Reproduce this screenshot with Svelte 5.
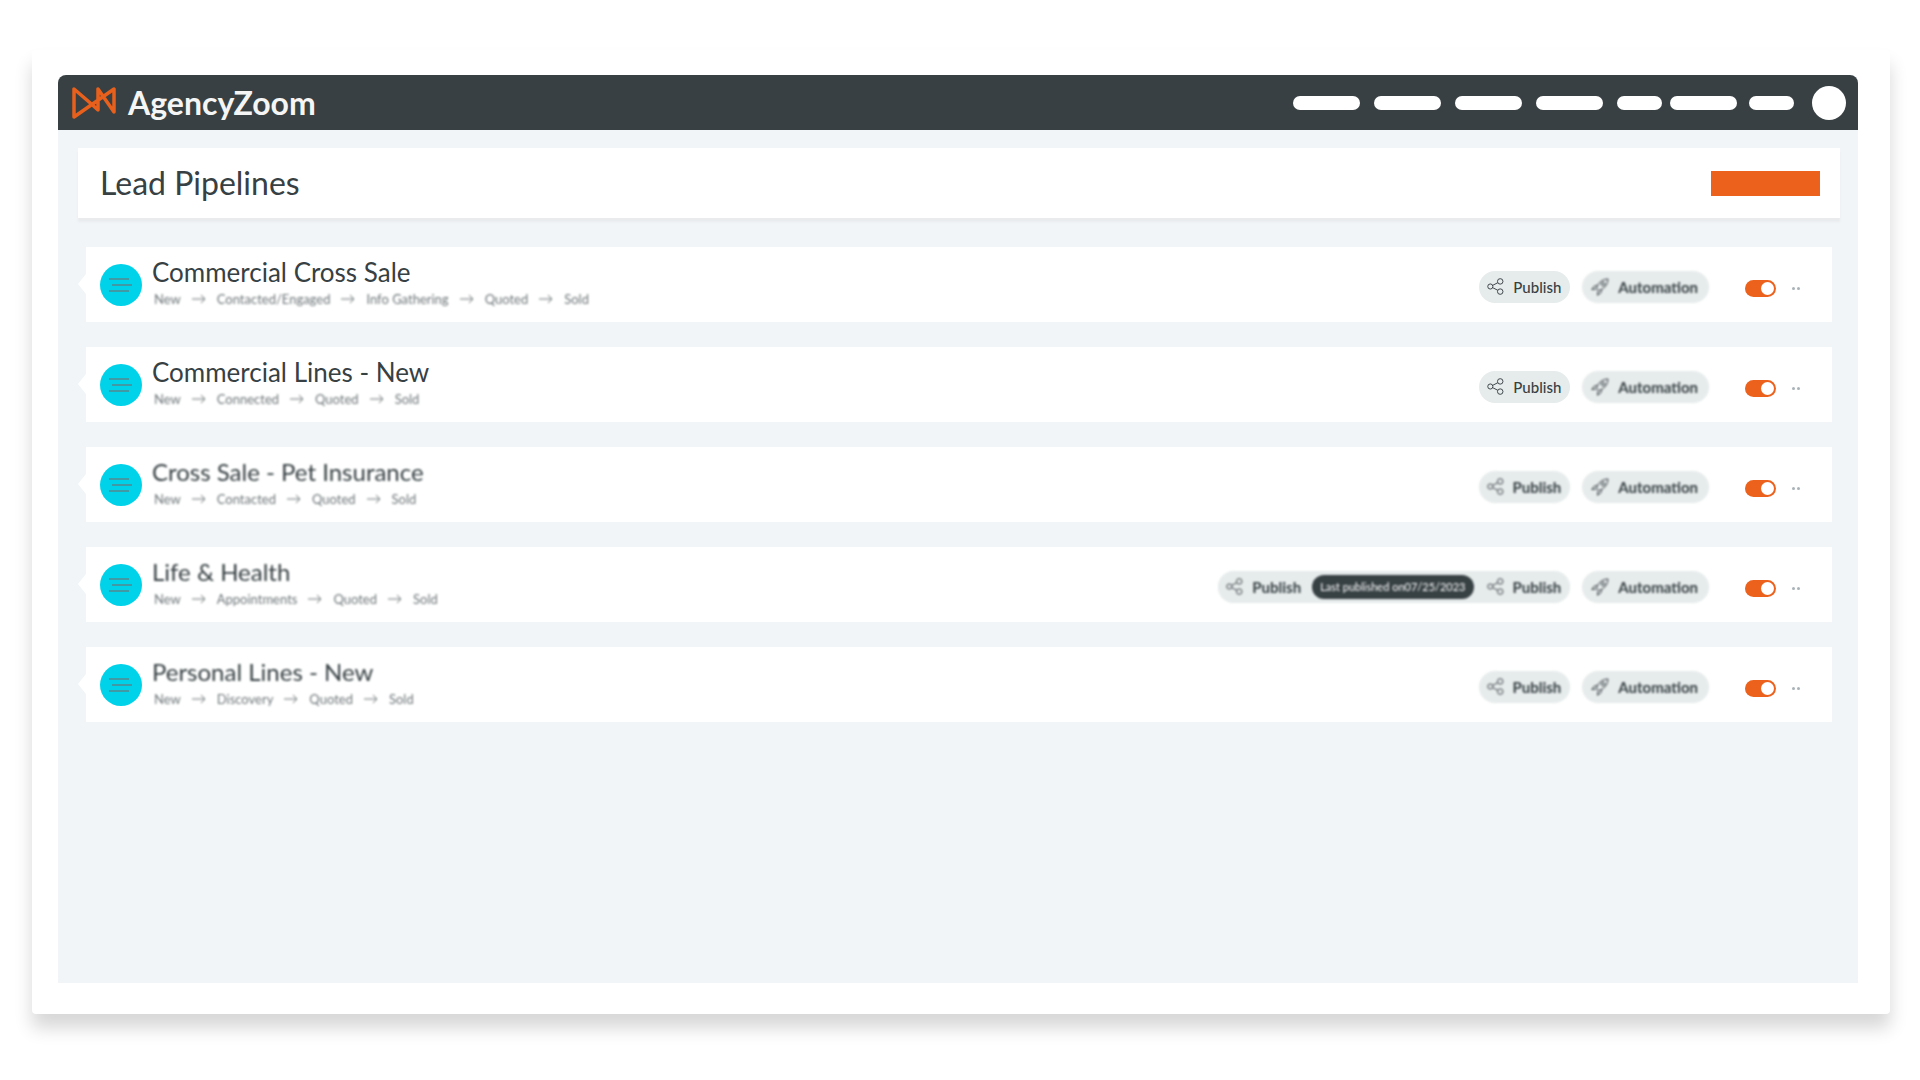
<script lang="ts">
    type Pipeline = {
        name: string;
        stages: string[];
        focused?: boolean;
        lastPublished?: string;
        enabled: boolean;
    };

    const navWidths = ["wide", "wide", "wide", "wide", "short", "wide", "short"];

    let pipelines: Pipeline[] = $state([
        {
            name: "Commercial Cross Sale",
            stages: ["New", "Contacted/Engaged", "Info Gathering", "Quoted", "Sold"],
            focused: true,
            enabled: true,
        },
        {
            name: "Commercial Lines - New",
            stages: ["New", "Connected", "Quoted", "Sold"],
            focused: true,
            enabled: true,
        },
        {
            name: "Cross Sale - Pet Insurance",
            stages: ["New", "Contacted", "Quoted", "Sold"],
            enabled: true,
        },
        {
            name: "Life & Health",
            stages: ["New", "Appointments", "Quoted", "Sold"],
            lastPublished: "07/25/2023",
            enabled: true,
        },
        {
            name: "Personal Lines - New",
            stages: ["New", "Discovery", "Quoted", "Sold"],
            enabled: true,
        },
    ]);
</script>

{#snippet shareIcon()}
    <svg class="icon" viewBox="0 0 18 18" fill="none" stroke="currentColor" aria-hidden="true">
        <circle cx="3.5" cy="9" r="2.7" />
        <circle cx="14" cy="3.6" r="2.9" />
        <circle cx="14" cy="14.4" r="2.9" />
        <path d="M6 7.800 11.400 5M6 10.200l5.400 2.800" />
    </svg>
{/snippet}

{#snippet rocketIcon()}
    <svg class="icon rocket" viewBox="0 0 18 18" fill="none" stroke="currentColor" aria-hidden="true">
        <path d="M5.500 10.500C7 5 10.500 1.500 17 1c-.5 6.500-4 10-9.500 11.500z" />
        <path d="M6.500 7.500 3.500 8 .8 11.500l4.200-.5M10.500 11.500 10 14.500 6.500 17.200l.5-4.200" />
        <circle cx="12" cy="6" r="1.700" />
        <path d="m5.500 10.500 2 2" />
    </svg>
{/snippet}

<div class="frame">
    <div class="app">
        <header class="topbar">
            <a class="brand" href="#home">
                <svg class="logo" viewBox="0 0 44 32" fill="none" aria-hidden="true">
                    <path
                        d="M2 2v28L42 2v23L26 2v21L20 17.500zM2 2l18 15.500"
                        stroke="#e8601b"
                        stroke-width="3.500"
                        stroke-linejoin="round"
                    />
                </svg>
                <span>AgencyZoom</span>
            </a>
            <nav class="nav" aria-label="Main">
                {#each navWidths as width, i}
                    <a class="nav-item {width}" href="#nav-{i}" aria-label="Menu item {i + 1}"></a>
                {/each}
                <button class="avatar" type="button" aria-label="Account"></button>
            </nav>
        </header>

        <main class="content">
            <div class="titlebar">
                <h1>Lead Pipelines</h1>
                <button class="add" type="button" aria-label="Add pipeline"></button>
            </div>

            <ul class="pipelines">
                {#each pipelines as pipeline}
                    <li class="pipeline">
                        <button class="handle" type="button" aria-label="Reorder {pipeline.name}">
                            <svg viewBox="0 0 24 16" aria-hidden="true">
                                <path
                                    d="M0 2h20M3 8h20M0 14h20"
                                    stroke="#3f9aa5"
                                    stroke-width="2"
                                />
                            </svg>
                        </button>
                        <div class="info">
                            <h2 class:dimmed={!pipeline.focused}>{pipeline.name}</h2>
                            <ol class="stages">
                                {#each pipeline.stages as stage, i}
                                    {#if i > 0}
                                        <li class="arrow" aria-hidden="true">
                                            <svg viewBox="0 0 14 10" fill="none" stroke="currentColor">
                                                <path d="M0 5h13M9 1l4 4-4 4" />
                                            </svg>
                                        </li>
                                    {/if}
                                    <li>{stage}</li>
                                {/each}
                            </ol>
                        </div>
                        <div class="actions">
                            {#if pipeline.lastPublished}
                                <div class="published dimmed">
                                    <button class="pill" type="button">
                                        {@render shareIcon()}Publish
                                    </button>
                                    <span class="tag">Last published on{pipeline.lastPublished}</span>
                                    <button class="pill" type="button">
                                        {@render shareIcon()}Publish
                                    </button>
                                </div>
                            {:else}
                                <button class="pill" class:dimmed={!pipeline.focused} type="button">
                                    {@render shareIcon()}Publish
                                </button>
                            {/if}
                            <button class="pill automation dimmed" type="button">
                                {@render rocketIcon()}Automation
                            </button>
                        </div>
                        <input
                            class="toggle"
                            type="checkbox"
                            aria-label="Enable {pipeline.name}"
                            bind:checked={pipeline.enabled}
                        />
                        <button class="more" type="button" aria-label="More options">
                            <i></i><i></i>
                        </button>
                    </li>
                {/each}
            </ul>
        </main>
    </div>
</div>

<style>
    :global(body) {
        background: #fff;
    }
    .frame {
        box-sizing: border-box;
        min-height: calc(100vh - 116px);
        margin: 50px 30px 66px 32px;
        padding: 25px 32px 31px 26px;
        display: flex;
        border-radius: 4px;
        background: #fff;
        box-shadow: 0 14px 18px rgba(0, 0, 0, 0.16);
        color: #374043;
        font-family: Lato, "Liberation Sans", sans-serif;
    }
    .app {
        flex: 1;
        display: flex;
        flex-direction: column;
        min-width: 0;
    }
    button {
        padding: 0;
        border: none;
        color: inherit;
        font-family: inherit;
        cursor: pointer;
    }
    h1,
    h2,
    ul,
    ol {
        margin: 0;
        padding: 0;
        list-style: none;
        font-weight: 400;
    }
    .topbar {
        height: 55px;
        padding: 0 12px 0 14px;
        display: flex;
        align-items: center;
        justify-content: space-between;
        border-radius: 8px 8px 0 0;
        background: #384043;
    }
    .brand {
        display: flex;
        align-items: center;
        gap: 12px;
        color: #f5f5f5;
        font-size: 32px;
        font-weight: 700;
        line-height: 36px;
        text-decoration: none;
    }
    .logo {
        width: 44px;
        height: 32px;
    }
    .nav {
        display: flex;
        align-items: center;
    }
    .nav-item {
        height: 14px;
        margin-right: 14px;
        border-radius: 7px;
        background: #fff;
    }
    .wide {
        width: 67px;
    }
    .short {
        width: 45px;
    }
    .short:not(:nth-last-child(2)) {
        margin-right: 8px;
    }
    .short + .wide {
        margin-right: 12px;
    }
    .avatar {
        width: 34px;
        height: 34px;
        margin-left: 4px;
        border-radius: 50%;
        background: #fff;
    }
    .content {
        flex: 1;
        padding: 18px 18px 64px 20px;
        background: #f1f5f8;
    }
    .titlebar {
        height: 70px;
        padding: 0 20px 0 22px;
        display: flex;
        align-items: center;
        justify-content: space-between;
        background: #fff;
        box-shadow: 0 4px 2px #e9ebed;
    }
    h1 {
        font-size: 32px;
        line-height: 40px;
    }
    .add {
        width: 109px;
        height: 25px;
        background: #ec611b;
    }
    .pipelines {
        margin: 29px 8px 0;
        display: flex;
        flex-direction: column;
        gap: 25px;
    }
    .pipeline {
        position: relative;
        height: 75px;
        padding: 0 32px 0 14px;
        display: flex;
        align-items: center;
        background: #fff;
    }
    .pipeline::before {
        content: "";
        position: absolute;
        left: -8px;
        top: 27px;
        border: solid transparent;
        border-width: 10px 8px 10px 0;
        border-right-color: #fff;
    }
    .handle {
        width: 42px;
        height: 42px;
        display: grid;
        place-items: center;
        border-radius: 50%;
        background: #00d3e9;
    }
    .handle svg {
        width: 24px;
        height: 16px;
    }
    .info {
        flex: 1;
        padding: 0 0 4px 10px;
    }
    h2 {
        font-size: 26px;
        line-height: 32px;
    }
    h2.dimmed {
        font-size: 24px;
    }
    .stages {
        display: flex;
        align-items: center;
        gap: 11px;
        padding: 1px 0 0 2px;
        color: #6f7679;
        font-size: 13px;
        line-height: 20px;
        filter: blur(1px);
    }
    .arrow {
        display: flex;
    }
    .arrow svg {
        width: 14px;
        height: 10px;
    }
    .dimmed {
        filter: blur(1px);
    }
    .actions {
        display: flex;
        gap: 12px;
        padding-top: 4px;
    }
    .pill {
        height: 32px;
        padding: 0 9px 0 8px;
        display: flex;
        align-items: center;
        gap: 9px;
        border-radius: 16px;
        background: #e6ebeb;
        font-size: 15px;
        font-weight: 500;
    }
    .pill.dimmed,
    .published .pill {
        font-weight: 700;
    }
    .pill.automation {
        padding: 0 11px 0 9px;
    }
    .icon {
        width: 17px;
        height: 17px;
    }
    .icon.rocket {
        width: 18px;
        height: 18px;
    }
    .published {
        display: flex;
        align-items: center;
        border-radius: 16px;
        background: #e6ebeb;
    }
    .tag {
        margin: 0 5px 0 2px;
        padding: 0 8px;
        border-radius: 12px;
        background: #374043;
        color: #fff;
        font-size: 11px;
        line-height: 24px;
    }
    .toggle {
        appearance: none;
        width: 31px;
        height: 17px;
        margin: 8px 16px 0 36px;
        padding: 2px;
        display: flex;
        border-radius: 9px;
        background: #b9c0c3;
        cursor: pointer;
    }
    .toggle::before {
        content: "";
        width: 13px;
        height: 13px;
        border-radius: 50%;
        background: #fff;
    }
    .toggle:checked {
        justify-content: flex-end;
        background: #ec611b;
    }
    .more {
        display: flex;
        gap: 2px;
        margin-top: 8px;
        background: none;
    }
    .more i {
        width: 3px;
        height: 3px;
        border-radius: 50%;
        background: #a9b3b8;
    }
</style>
